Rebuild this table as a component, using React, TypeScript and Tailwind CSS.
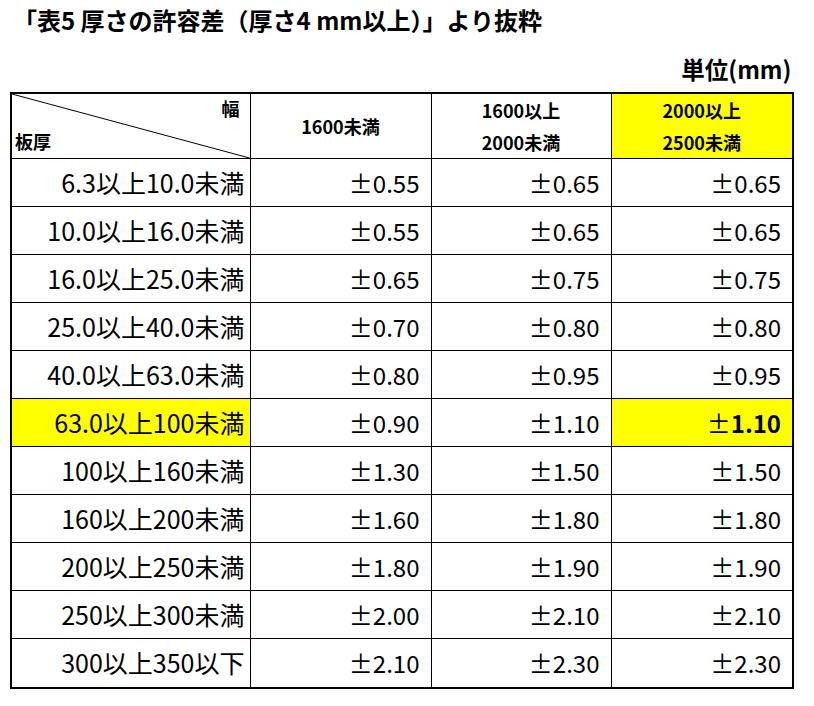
import React from "react";

const rows: { label: string; v: [string, string, string]; hl?: boolean }[] = [
  { label: "6.3以上10.0未満", v: ["0.55", "0.65", "0.65"] },
  { label: "10.0以上16.0未満", v: ["0.55", "0.65", "0.65"] },
  { label: "16.0以上25.0未満", v: ["0.65", "0.75", "0.75"] },
  { label: "25.0以上40.0未満", v: ["0.70", "0.80", "0.80"] },
  { label: "40.0以上63.0未満", v: ["0.80", "0.95", "0.95"] },
  { label: "63.0以上100未満", v: ["0.90", "1.10", "1.10"], hl: true },
  { label: "100以上160未満", v: ["1.30", "1.50", "1.50"] },
  { label: "160以上200未満", v: ["1.60", "1.80", "1.80"] },
  { label: "200以上250未満", v: ["1.80", "1.90", "1.90"] },
  { label: "250以上300未満", v: ["2.00", "2.10", "2.10"] },
  { label: "300以上350以下", v: ["2.10", "2.30", "2.30"] },
];

const font = { fontFamily: '"Noto Sans CJK JP", "Noto Sans", sans-serif' };

export default function App() {
  return (
    <div className="w-[814px] h-[706px] bg-white text-black" style={font}>
      <div className="pl-[13px] pt-[5px] h-[40px] text-[24px] font-bold leading-[30px] whitespace-nowrap">
        「表5 厚さの許容差（厚さ4 mm以上）」より抜粋
      </div>
      <div className="h-[52px] pr-[23px] pt-[14px] text-right text-[24px] font-bold leading-[30px]">
        <span className="inline-block origin-right scale-x-[0.98]">単位(mm)</span>
      </div>
      <div className="ml-[10px] w-[784px] border-[2.5px] border-black">
        <table className="w-full border-collapse table-fixed">
          <colgroup>
            <col className="w-[238px]" />
            <col className="w-[181px]" />
            <col className="w-[180px]" />
            <col />
          </colgroup>
          <thead>
            <tr className="h-[64px]">
              <th className="relative border-r border-b border-black p-0 font-bold text-[18px]">
                <svg className="absolute inset-0 w-full h-full" viewBox="0 0 238 64" preserveAspectRatio="none">
                  <line x1="0" y1="0" x2="238" y2="64" stroke="black" strokeWidth="1" />
                </svg>
                <div className="absolute right-[10px] top-[1px] leading-[26px]">幅</div>
                <div className="absolute left-[3px] bottom-[4px] leading-[26px]">板厚</div>
              </th>
              <th className="border-r border-b border-black p-0 font-bold text-[18px] leading-[32px]">1600未満</th>
              <th className="border-r border-b border-black p-0 font-bold text-[18px] leading-[32px]">
                <div>1600以上</div>
                <div>2000未満</div>
              </th>
              <th className="border-b border-black p-0 font-bold text-[18px] leading-[32px] bg-[#ffff00]">
                <div>2000以上</div>
                <div>2500未満</div>
              </th>
            </tr>
          </thead>
          <tbody>
            {rows.map((r, i) => {
              const last = i === rows.length - 1;
              const b = last ? "" : "border-b";
              return (
                <tr key={i} className="h-[48px] text-[24px] font-normal">
                  <td className={`border-r ${b} border-black text-right pr-[5px] text-[25px] ${r.hl ? "bg-[#ffff00]" : ""}`}>
                    {r.label}
                  </td>
                  <td className={`border-r ${b} border-black text-right pr-[11px]`}>±{r.v[0]}</td>
                  <td className={`border-r ${b} border-black text-right pr-[11px]`}>±{r.v[1]}</td>
                  <td className={`${b} border-black text-right pr-[11px] ${r.hl ? "bg-[#ffff00]" : ""}`}>
                    ±{r.hl ? <span className="font-bold">{r.v[2]}</span> : r.v[2]}
                  </td>
                </tr>
              );
            })}
          </tbody>
        </table>
      </div>
    </div>
  );
}
